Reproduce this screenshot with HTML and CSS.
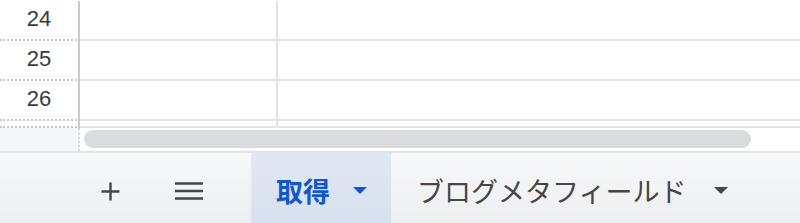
FILE: index.html
```html
<!DOCTYPE html>
<html lang="ja">
<head>
<meta charset="utf-8">
<title>Sheet</title>
<link rel="stylesheet" href="styles.css">
</head>
<body>
<div class="sheet">
  <div class="grid">
    <div class="row"><div class="rh">24</div><div class="cell"></div><div class="cell fill"></div></div>
    <div class="row"><div class="rh">25</div><div class="cell"></div><div class="cell fill"></div></div>
    <div class="row"><div class="rh">26</div><div class="cell"></div><div class="cell fill"></div></div>
    <div class="row partial"><div class="rh"></div><div class="cell"></div><div class="cell fill"></div></div>
  </div>
  <div class="hscroll">
    <div class="corner"></div>
    <div class="track"><div class="thumb"></div></div>
  </div>
  <div class="tabbar">
    <div class="tools">
      <div class="tool">
        <svg width="21" height="21" viewBox="0 0 21 21"><path d="M10.5 1.5v18M1.5 10.5h18" stroke="#444746" stroke-width="2.4" fill="none"/></svg>
      </div>
      <div class="tool">
        <svg width="28" height="18" viewBox="0 0 28 18"><path d="M0 1.5h28M0 9h28M0 16.5h28" stroke="#444746" stroke-width="2.6" fill="none"/></svg>
      </div>
    </div>
    <div class="tab active"><span class="label">取得</span><span class="caret"></span></div>
    <div class="tab"><span class="label">ブログメタフィールド</span><span class="caret"></span></div>
  </div>
</div>
</body>
</html>
```
FILE: styles.css
```css
html, body {
  margin: 0;
  padding: 0;
  background: #ffffff;
}
.sheet {
  width: 800px;
  height: 223px;
  overflow: hidden;
  display: flex;
  flex-direction: column;
}
.grid {
  padding-top: 1px;
}
.row {
  display: flex;
  height: 40px;
}
.rh {
  width: 78px;
  border-right: 2px solid #c9cacc;
  border-bottom: 2px dotted #c4c6c8;
  display: flex;
  align-items: center;
  justify-content: center;
  padding-bottom: 3px;
  font-family: "Liberation Sans", Arial, sans-serif;
  font-size: 22px;
  color: #3a3b3c;
}
.cell {
  width: 196px;
  border-right: 2px solid #e2e3e3;
  border-bottom: 2px solid #e2e3e3;
}
.cell.fill {
  flex: 1;
  border-right: none;
}
.row .rh, .row .cell {
  box-sizing: border-box;
  height: 40px;
}
.rh { width: 80px; }
.cell { width: 198px; }
.cell.fill { width: auto; }
.row.partial {
  height: 7px;
}
.row.partial .rh, .row.partial .cell {
  height: 7px;
  padding: 0;
}
.hscroll {
  display: flex;
  height: 23px;
}
.corner {
  width: 78px;
  background: #f6f7f8;
  border-right: 2px dotted #d2d4d6;
}
.track {
  flex: 1;
  padding: 2px 0 0 4px;
}
.thumb {
  width: 667px;
  height: 18px;
  border-radius: 9px;
  background: #dadce0;
}
.tabbar {
  flex: 1;
  border-top: 2px solid #e3e4e6;
  background: linear-gradient(#f8f9fa, #eceef0);
  display: flex;
  align-items: stretch;
  font-family: "Noto Sans CJK JP", "Liberation Sans", sans-serif;
}
.tools {
  display: flex;
  gap: 39px;
  margin-left: 90px;
  margin-right: 42px;
}
.tool {
  width: 40px;
  display: flex;
  align-items: center;
  justify-content: center;
  padding-top: 6px;
}
.tab {
  display: flex;
  align-items: center;
  padding: 4px 24px 0 26px;
  gap: 28px;
  font-size: 27px;
  color: #444746;
}
.tab.active {
  background: linear-gradient(#e1e8f5, #d7e0ee);
  padding-left: 25px;
  gap: 23px;
  color: #1257cc;
  font-weight: 700;
}
.label {
  line-height: 1;
}
.caret {
  width: 0;
  height: 0;
  border-left: 7.5px solid transparent;
  border-right: 7.5px solid transparent;
  border-top: 7px solid currentColor;
}
```
